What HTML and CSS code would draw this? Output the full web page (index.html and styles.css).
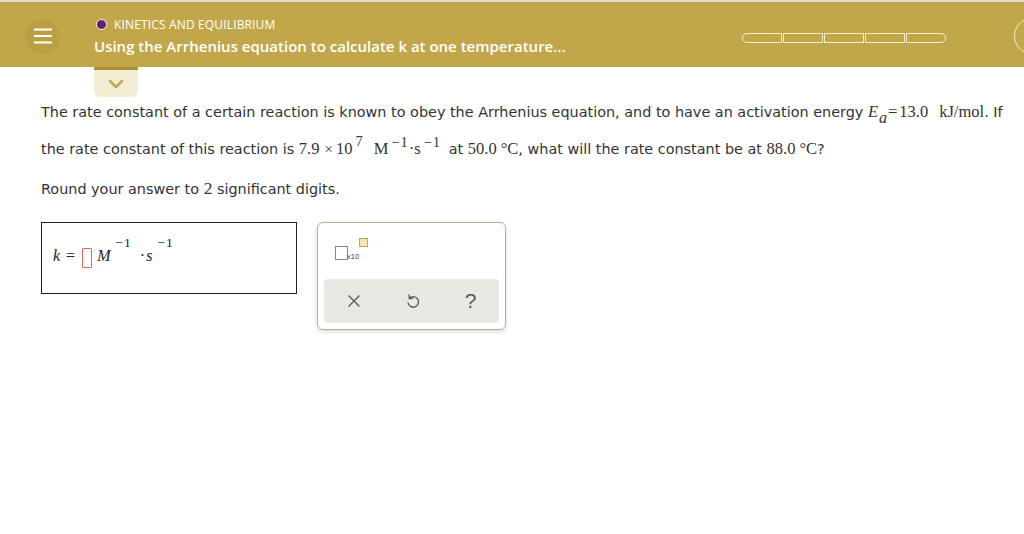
FILE: index.html
```html
<!DOCTYPE html>
<html>
<head>
<meta charset="utf-8">
<link rel="stylesheet" href="styles.css">
</head>
<body>
<div class="topline"></div>
<header class="header">
  <div class="menu-btn">
    <svg width="20" height="16" viewBox="0 0 20 16"><path d="M1 1.5h18M1 8h18M1 14.5h18" stroke="#fff" stroke-width="2" fill="none"/></svg>
  </div>
  <div class="titles">
    <div class="topic"><span class="dot"></span>KINETICS AND EQUILIBRIUM</div>
    <div class="title">Using the Arrhenius equation to calculate k at one temperature...</div>
  </div>
  <div class="progress">
    <span class="seg first"></span><span class="seg"></span><span class="seg"></span><span class="seg"></span><span class="seg last"></span>
  </div>
  <div class="circle"></div>
</header>
<div class="tab-wrap">
  <div class="tab">
    <svg width="16" height="10" viewBox="0 0 16 10"><path d="M2 2l6 6 6-6" stroke="#c2a74a" stroke-width="2.6" fill="none" stroke-linecap="round" stroke-linejoin="round"/></svg>
  </div>
</div>
<main class="content">
  <p class="line l1">The rate constant of a certain reaction is known to obey the Arrhenius equation, and to have an activation energy <span class="m"><i>E</i><sub class="sub">a</sub><span class="eq">=</span>13.0<span class="sp"></span>kJ/mol</span>. If</p>
  <p class="line l2">the rate constant of this reaction is <span class="m">7.9<span class="times">×</span>10<sup class="sup7">7</sup><span class="sp"></span>M<sup class="sup">−1</sup>·s<sup class="sup last">−1</sup></span> at <span class="m">50.0 °C</span>, what will the rate constant be at <span class="m">88.0 °C</span>?</p>
  <p class="line l3">Round your answer to <span class="m big">2</span> significant digits.</p>
  <div class="answer-row">
    <div class="answer">
      <span class="ans"><i>k</i><span class="aeq">=</span><span class="inbox"></span><i class="am">M</i><sup class="asup">−1</sup><span class="cdot">·</span><i>s</i><sup class="asup">−1</sup></span>
    </div>
    <div class="keypad">
      <div class="keys-top">
        <span class="sci">
          <span class="sq"></span><span class="x10">x10</span><span class="gsq"></span>
        </span>
      </div>
      <div class="keys-bottom">
        <svg width="14" height="14" viewBox="0 0 14 14"><path d="M1.5 1.5l11 11M12.5 1.5l-11 11" stroke="#5f5a50" stroke-width="1.4" fill="none"/></svg>
        <svg width="16" height="18" viewBox="0 0 16 18"><path d="M4.2 6.5A5.3 5.3 0 1 1 3 10.5" stroke="#5f5a50" stroke-width="1.4" fill="none"/><path d="M4 2.5l0.4 4.2 4-0.8" stroke="#5f5a50" stroke-width="1.4" fill="none" stroke-linejoin="round"/></svg>
        <span class="q">?</span>
      </div>
    </div>
  </div>
</main>
</body>
</html>
```
FILE: styles.css
```css
html, body {
  margin: 0;
  padding: 0;
  background: #fff;
}
body {
  width: 1024px;
  height: 534px;
  overflow: hidden;
  font-family: "DejaVu Sans", Verdana, sans-serif;
  color: #333;
}
.topline {
  height: 2px;
  background: #dcdcd6;
}
.header {
  height: 65px;
  background: #c2a74a;
  display: flex;
  align-items: center;
  position: relative;
}
.menu-btn {
  width: 35px;
  height: 35px;
  border-radius: 50%;
  background: #bc9f45;
  margin-left: 25px;
  margin-top: 3px;
  display: flex;
  align-items: center;
  justify-content: center;
}
.titles {
  margin-left: 34px;
  margin-top: 4px;
  color: #fff;
  font-family: "Open Sans", "Liberation Sans", sans-serif;
}
.topic {
  font-size: 12px;
  display: flex;
  align-items: center;
  height: 14px;
  margin-left: 2px;
  letter-spacing: 0.15px;
}
.dot {
  width: 9px;
  height: 9px;
  border-radius: 50%;
  background: #6d1e6d;
  border: 1px solid #fff;
  margin-right: 7px;
}
.title {
  font-size: 15px;
  font-weight: 600;
  margin-top: 4px;
}
.progress {
  display: flex;
  margin-left: auto;
  margin-right: 78px;
  margin-top: 7px;
}
.seg {
  width: 38px;
  height: 8px;
  border: 1.5px solid #f5ecc8;
  margin-left: 1px;
}
.seg.first {
  border-radius: 6px 0 0 6px;
  margin-left: 0;
}
.seg.last {
  border-radius: 0 6px 6px 0;
}
.circle {
  position: absolute;
  left: 1014px;
  top: 16px;
  width: 34px;
  height: 34px;
  border: 1px solid #f4ecd0;
  border-radius: 50%;
}
.tab-wrap {
  padding-left: 94px;
}
.tab {
  width: 44px;
  height: 27px;
  background: #f3edd6;
  border-top: 3px solid #a98f32;
  border-radius: 0 0 6px 6px;
  display: flex;
  align-items: center;
  justify-content: center;
}
.content {
  padding-left: 41px;
}
.line {
  margin: 0;
  font-size: 14.4px;
  white-space: nowrap;
  height: 22px;
  line-height: 22px;
}
.l1 {
  margin-top: 4px;
}
.l2 {
  margin-top: 15px;
}
.l3 {
  margin-top: 17px;
}
.m {
  font-family: "Liberation Serif", "Times New Roman", serif;
  font-size: 16.5px;
}
.big {
  font-size: 17.5px;
}
.sub {
  font-style: italic;
  font-size: 16px;
  vertical-align: -6px;
  line-height: 0;
  margin-left: 1px;
}
.eq {
  margin: 0 2px 0 1px;
}
.sp {
  display: inline-block;
  width: 11px;
}
.sup {
  font-size: 14.5px;
  vertical-align: 7px;
  line-height: 0;
  margin-left: 3px;
  letter-spacing: 1px;
}
.sup.last {
  margin-right: 3px;
}
.sup7 {
  font-size: 14.5px;
  vertical-align: 8px;
  line-height: 0;
  margin-left: 3px;
}
.times {
  font-size: 15px;
  margin: 0 3px 0 5px;
}
.answer-row {
  display: flex;
  align-items: flex-start;
  margin-top: 23px;
}
.answer {
  width: 254px;
  height: 70px;
  border: 1px solid #222;
}
.ans {
  display: inline-flex;
  align-items: baseline;
  margin-left: 11px;
  margin-top: 24px;
  font-family: "Liberation Serif", "Times New Roman", serif;
  font-size: 16px;
  color: #222;
}
.aeq {
  margin: 0 7px 0 6px;
}
.inbox {
  display: inline-block;
  width: 8px;
  height: 18px;
  border: 1.5px solid #d9675a;
  border-radius: 1px;
  align-self: center;
  margin-right: 5px;
  position: relative;
  top: 1px;
}
.asup {
  font-style: normal;
  font-size: 13.5px;
  position: relative;
  top: -14px;
  margin-left: 5px;
  letter-spacing: 1px;
}
.cdot {
  margin-left: 8px;
  margin-right: 1px;
}
.keypad {
  margin-left: 20px;
  width: 175px;
  height: 100px;
  border: 1px solid #b7ad94;
  border-radius: 6px;
  box-shadow: 0 2px 5px rgba(0,0,0,0.15);
  display: flex;
  flex-direction: column;
  padding: 0 6px 6px 6px;
}
.keys-top {
  height: 56px;
  position: relative;
}
.sci {
  position: absolute;
  left: 11px;
  top: 15px;
  width: 40px;
  height: 24px;
}
.sq {
  position: absolute;
  left: 0;
  top: 8px;
  width: 11px;
  height: 12px;
  border: 1px solid #8a8470;
}
.x10 {
  position: absolute;
  left: 12px;
  top: 14px;
  font-family: "Liberation Sans", Arial, sans-serif;
  font-size: 7.5px;
  color: #444;
}
.gsq {
  position: absolute;
  left: 24px;
  top: 0;
  width: 7px;
  height: 7px;
  background: #f3e7b4;
  border: 1.5px solid #c2a74a;
}
.keys-bottom {
  height: 44px;
  background: #eae8e3;
  border-radius: 4px;
  display: flex;
  align-items: center;
  justify-content: center;
  gap: 44px;
}
.q {
  font-family: "Liberation Sans", Arial, sans-serif;
  font-size: 21px;
  color: #5f5a50;
}
```
